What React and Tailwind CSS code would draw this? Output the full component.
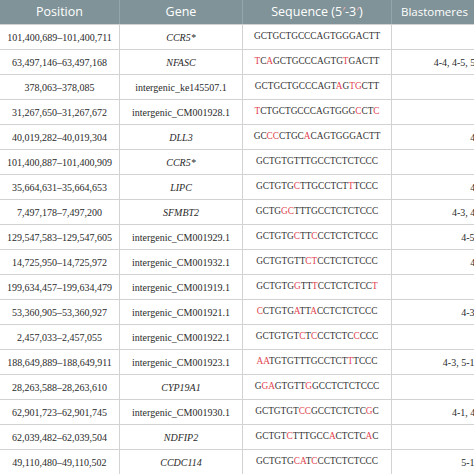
import React from "react";

const rows = [
  ["101,400,689–101,400,711", "CCR5*", true, "GCTGCTGCCCAGTGGGACTT", ""],
  ["63,497,146–63,497,168", "NFASC", true, "TCAGCTGCCCAGTGTGACTT", "4-4, 4-5, 5-1, 5-2, 5-4"],
  ["378,063–378,085", "intergenic_ke145507.1", false, "GCTGCTGCCCAGTAGTGCTT", ""],
  ["31,267,650–31,267,672", "intergenic_CM001928.1", false, "TCTGCTGCCCAGTGGGCCTC", ""],
  ["40,019,282–40,019,304", "DLL3", true, "GCCCCTGCACAGTGGGACTT", "4-2"],
  ["101,400,887–101,400,909", "CCR5*", true, "GCTGTGTTTGCCTCTCTCCC", ""],
  ["35,664,631–35,664,653", "LIPC", true, "GCTGTGCTTGCCTCTTTCCC", "4-1"],
  ["7,497,178–7,497,200", "SFMBT2", true, "GCTGGCTTTGCCTCTCTCCC", "4-3, 4-5, 5-2"],
  ["129,547,583–129,547,605", "intergenic_CM001929.1", false, "GCTGTGCTTCCCTCTCTCCC", "4-5, 5-1"],
  ["14,725,950–14,725,972", "intergenic_CM001932.1", false, "GCTGTGTTCTCCTCTCTCCC", "4-2"],
  ["199,634,457–199,634,479", "intergenic_CM001919.1", false, "GCTGTGGTTTCCTCTCTCCT", ""],
  ["53,360,905–53,360,927", "intergenic_CM001921.1", false, "CCTGTGATTACCTCTCTCCC", "4-3, 5-4"],
  ["2,457,033–2,457,055", "intergenic_CM001922.1", false, "GCTGTGTCTCCCTCTCCCCC", ""],
  ["188,649,889–188,649,911", "intergenic_CM001923.1", false, "AATGTGTTTGCCTCTTTCCC", "4-3, 5-1, 5-2, 5-3"],
  ["28,263,588–28,263,610", "CYP19A1", true, "GGAGTGTTGGCCTCTCTCCC", ""],
  ["62,901,723–62,901,745", "intergenic_CM001930.1", false, "GCTGTGTCCGCCTCTCTCGC", "4-1, 4-4, 5-2"],
  ["62,039,482–62,039,504", "NDFIP2", true, "GCTGTCTTTGCCACTCTCAC", ""],
  ["49,110,480–49,110,502", "CCDC114", true, "GCTGTGCATCCCTCTCTCCC", "5-1, 5-3"],
];

// mismatches are marked against the on-target sequence of each guide
function Seq({ seq, idx }) {
  const ref = idx < 5 ? rows[0][3] : rows[5][3];
  return (
    <span>
      {seq.split("").map((c, i) => (
        <span key={i} className={c !== ref[i] ? "text-[#e2434e]" : ""}>{c}</span>
      ))}
    </span>
  );
}

export default function App() {
  return (
    <div className="w-[474px] h-[474px] overflow-hidden bg-white">
      <div className="w-[562px] text-[#2a2a2a] font-['Liberation_Serif',serif]">
        {/* header */}
        <div className="flex h-[24px] bg-[#7f9398] text-white text-[12.5px] items-center font-['Open_Sans',sans-serif]">
          <div className="w-[120px] h-full flex items-center justify-center border-r border-[#94a6ab]">Position</div>
          <div className="w-[123px] h-full flex items-center justify-center border-r border-[#94a6ab]">Gene</div>
          <div className="w-[149px] h-full flex items-center justify-center border-r border-[#94a6ab]">
            Sequence (5<span className="text-[#f3b3b8]">′</span>-3<span className="text-[#f3b3b8]">′</span>)
          </div>
          <div className="w-[170px] h-full flex items-center pl-[9px] text-[11.5px]">Blastomeres</div>
        </div>

        {rows.map((r, i) => (
          <div key={i} className="flex h-[25px] border-t border-[#d2d2d2] text-[10px]">
            <div className="w-[120px] flex items-center justify-center border-r border-[#d2d2d2]">{r[0]}</div>
            <div className={`w-[123px] flex items-center justify-center border-r border-[#d2d2d2] ${r[2] ? "italic" : ""}`}>{r[1]}</div>
            <div className="w-[149px] flex items-center justify-center border-r border-[#d2d2d2] text-[9.3px] text-[#333]">
              <Seq seq={r[3]} idx={i} />
            </div>
            <div className="w-[170px] flex items-center justify-center whitespace-nowrap">{r[4]}</div>
          </div>
        ))}
      </div>
    </div>
  );
}
